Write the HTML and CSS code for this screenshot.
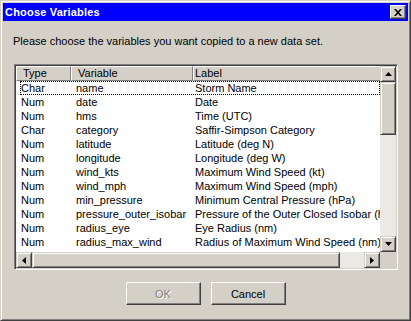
FILE: index.html
```html
<!DOCTYPE html>
<html lang="en">
<head>
  <meta charset="UTF-8">
  <title>Choose Variables</title>
  <link rel="stylesheet" href="styles.css">
</head>
<body>

<div class="window">
  <div class="titlebar">
    <span class="title">Choose Variables</span>
    <button class="close-btn">
      <svg width="8" height="7" viewBox="0 0 8 7"><path d="M0 0h2l2 2.2L6 0h2L5 3.5 8 7H6L4 4.8 2 7H0l3-3.5z" fill="#000"/></svg>
    </button>
  </div>

  <p class="prompt">Please choose the variables you want copied to a new data set.</p>

  <div class="listbox">
    <div class="list-main">
      <div class="list-head">
        <div class="hcell">Type</div>
        <div class="hcell">Variable</div>
        <div class="hcell last">Label</div>
      </div>
      <div id="rows"></div>
    </div>

    <div class="vscroll">
      <div class="sbtn"><svg width="7" height="4" viewBox="0 0 7 4"><path d="M3.5 0L7 4H0z"/></svg></div>
      <div class="vthumb"></div>
      <div class="track"></div>
      <div class="sbtn"><svg width="7" height="4" viewBox="0 0 7 4"><path d="M0 0h7L3.5 4z"/></svg></div>
    </div>

    <div class="hscroll">
      <div class="sbtn"><svg width="4" height="7" viewBox="0 0 4 7"><path d="M4 0v7L0 3.5z"/></svg></div>
      <div class="hthumb"></div>
      <div class="track"></div>
      <div class="sbtn"><svg width="4" height="7" viewBox="0 0 4 7"><path d="M0 0l4 3.5L0 7z"/></svg></div>
    </div>

    <div class="corner"></div>
  </div>

  <div class="buttons">
    <button class="btn" disabled>OK</button>
    <button class="btn">Cancel</button>
  </div>
</div>

<script>
  const vars = [
    ['Char', 'name', 'Storm Name'],
    ['Num', 'date', 'Date'],
    ['Num', 'hms', 'Time (UTC)'],
    ['Char', 'category', 'Saffir-Simpson Category'],
    ['Num', 'latitude', 'Latitude (deg N)'],
    ['Num', 'longitude', 'Longitude (deg W)'],
    ['Num', 'wind_kts', 'Maximum Wind Speed (kt)'],
    ['Num', 'wind_mph', 'Maximum Wind Speed (mph)'],
    ['Num', 'min_pressure', 'Minimum Central Pressure (hPa)'],
    ['Num', 'pressure_outer_isobar', 'Pressure of the Outer Closed Isobar (hPa)'],
    ['Num', 'radius_eye', 'Eye Radius (nm)'],
    ['Num', 'radius_max_wind', 'Radius of Maximum Wind Speed (nm)'],
    ['Num', 'radius_outer_isobar', 'Radius of the Outer Closed Isobar (nm)']
  ];

  const rows = document.getElementById('rows');
  vars.forEach((v, i) => {
    const row = document.createElement('div');
    row.className = i === 0 ? 'row focus' : 'row';
    v.forEach(text => {
      const cell = document.createElement('div');
      cell.className = 'cell';
      cell.textContent = text;
      row.appendChild(cell);
    });
    rows.appendChild(row);
  });
</script>

</body>
</html>
```

FILE: styles.css
```css
body {
  margin: 0;
  font-family: "Liberation Sans", Arial, sans-serif;
  font-size: 11px;
  color: #000;
}
.window {
  width: 411px;
  height: 321px;
  box-sizing: border-box;
  padding: 2px;
  background-color: #d4d0c8;
  border: 1px solid;
  border-color: #d4d0c8 #404040 #404040 #d4d0c8;
  box-shadow: inset 1px 1px #fff, inset -1px -1px #808080;
  display: flex;
  flex-direction: column;
}
.titlebar {
  height: 18px;
  background-color: #0000ff;
  display: flex;
  align-items: center;
  justify-content: space-between;
  padding: 0 2px;
}
.title {
  color: #fff;
  font-weight: bold;
  font-size: 11px;
  letter-spacing: 0.2px;
}
.close-btn {
  width: 16px;
  height: 14px;
  padding: 0;
  margin: 0;
  background-color: #d4d0c8;
  border: 1px solid;
  border-color: #fff #404040 #404040 #fff;
  box-shadow: inset -1px -1px #808080;
  display: flex;
  align-items: center;
  justify-content: center;
}
.prompt {
  margin: 14px 0 0 10px;
  line-height: 13px;
}
.listbox {
  margin: 16px 10px 0 11px;
  height: 206px;
  box-sizing: border-box;
  border: 1px solid;
  border-color: #808080 #fff #fff #808080;
  box-shadow: inset 1px 1px #404040, inset -1px -1px #d4d0c8;
  padding: 1px;
  display: grid;
  grid-template-columns: 364px 16px;
  grid-template-rows: 186px 16px;
  background-color: #fff;
}
.list-main {
  overflow: hidden;
  background-color: #fff;
}
.list-head {
  display: grid;
  grid-template-columns: 55px 122px 1fr;
  height: 15px;
  background-color: #d4d0c8;
}
.hcell {
  box-sizing: border-box;
  padding-left: 6px;
  line-height: 13px;
  border-top: 1px solid #fff;
  border-bottom: 1px solid #808080;
  border-left: 1px solid #fff;
  border-right: 1px solid #808080;
  white-space: nowrap;
}
.hcell.last {
  padding-left: 1px;
  border-right: none;
}
.row {
  display: grid;
  grid-template-columns: 55px 122px 1fr;
  height: 14px;
  box-sizing: border-box;
}
.row.focus {
  outline: 1px dotted #000;
  outline-offset: -1px;
  margin-left: 4px;
  grid-template-columns: 51px 122px 1fr;
}
.cell {
  padding-left: 5px;
  line-height: 14px;
  white-space: nowrap;
  overflow: hidden;
}
.row.focus .cell:first-child {
  padding-left: 1px;
}
.cell:last-child {
  padding-left: 2px;
}
.vscroll {
  display: flex;
  flex-direction: column;
}
.hscroll {
  display: flex;
}
.sbtn {
  width: 16px;
  height: 16px;
  flex: none;
  box-sizing: border-box;
  background-color: #d4d0c8;
  border: 1px solid;
  border-color: #d4d0c8 #404040 #404040 #d4d0c8;
  box-shadow: inset 1px 1px #fff, inset -1px -1px #808080;
  display: flex;
  align-items: center;
  justify-content: center;
}
.vthumb, .hthumb {
  box-sizing: border-box;
  background-color: #d4d0c8;
  border: 1px solid;
  border-color: #d4d0c8 #404040 #404040 #d4d0c8;
  box-shadow: inset 1px 1px #fff, inset -1px -1px #808080;
}
.vthumb {
  height: 53px;
}
.hthumb {
  width: 308px;
}
.track {
  flex: 1;
  background-color: #ebe9e5;
}
.corner {
  background-color: #d4d0c8;
}
.buttons {
  display: flex;
  justify-content: center;
  gap: 10px;
  margin-top: 12px;
}
.btn {
  width: 75px;
  height: 23px;
  padding: 0;
  font-family: "Liberation Sans", Arial, sans-serif;
  font-size: 11px;
  color: #000;
  background-color: #d4d0c8;
  border: 1px solid;
  border-color: #fff #404040 #404040 #fff;
  box-shadow: inset -1px -1px #808080;
}
.btn:disabled {
  color: #808080;
  text-shadow: 1px 1px #fff;
}
```
